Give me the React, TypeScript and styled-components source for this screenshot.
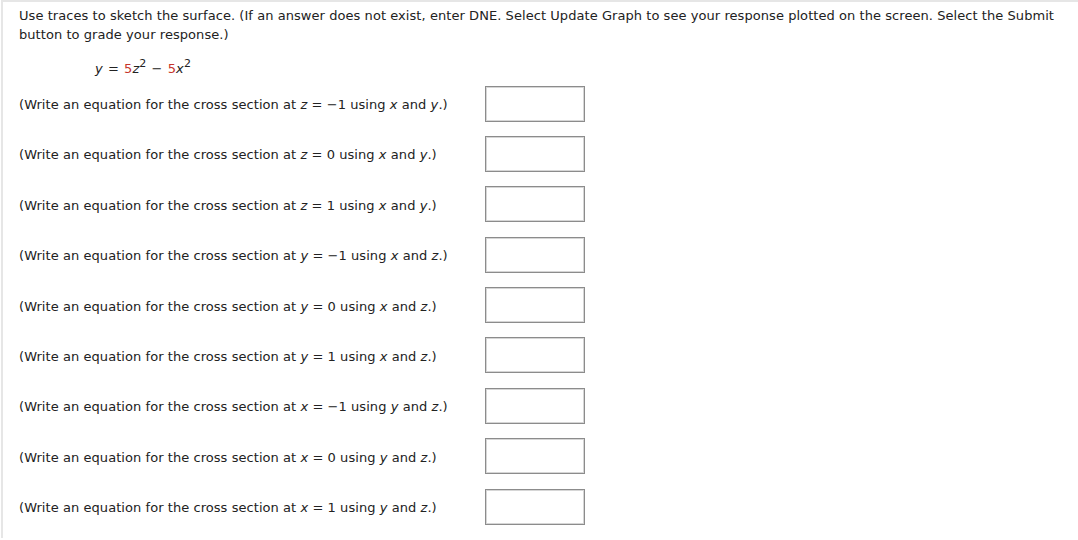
import React from "react";
import styled, { createGlobalStyle } from "styled-components";

const Global = createGlobalStyle`
  html, body { margin: 0; padding: 0; background: #fff; }
  body { font-family: "DejaVu Sans", Verdana, sans-serif; color: #222; }
`;

const Page = styled.div`
  border-top: 2px solid #e6e6e6;
  border-left: 2px solid #e6e6e6;
  margin-left: 1px;
  padding: 5px 0 0 16px;
  min-height: 538px;
  box-sizing: border-box;
  font-size: 13px;
  letter-spacing: 0.06px;
`;

const Intro = styled.p`
  margin: 0;
  line-height: 18.5px;
  width: 1055px;
`;

const Equation = styled.div`
  margin: 15px 0 0 76px;
  height: 20px;
  line-height: 20px;
  word-spacing: 1px;
`;

const V = styled.i`
  font-style: italic;
`;

const Red = styled.span`
  color: #c6352c;
`;

const Sup = styled.sup`
  font-size: 11px;
  line-height: 0;
  vertical-align: 6px;
`;

const List = styled.div`
  margin-top: 7px;
  display: flex;
  flex-direction: column;
  gap: 15.4px;
`;

const Row = styled.div`
  display: flex;
  align-items: center;
  height: 35px;
`;

const Label = styled.span`
  width: 466px;
  flex: none;
  padding-top: 2px;
`;

const Box = styled.div`
  width: 100px;
  height: 36px;
  box-sizing: border-box;
  border: 1px solid #8c8c8c;
  box-shadow: 0 0 0 1px #d6d6d6 inset;
  background: #fff;
`;

const rows: [string, string, string, string][] = [
  ["z", "\u22121", "x", "y"],
  ["z", "0", "x", "y"],
  ["z", "1", "x", "y"],
  ["y", "\u22121", "x", "z"],
  ["y", "0", "x", "z"],
  ["y", "1", "x", "z"],
  ["x", "\u22121", "y", "z"],
  ["x", "0", "y", "z"],
  ["x", "1", "y", "z"],
];

export default function App() {
  return (
    <>
      <Global />
      <Page>
        <Intro>
          Use traces to sketch the surface. (If an answer does not exist, enter DNE. Select Update Graph to see your
          response plotted on the screen. Select the Submit button to grade your response.)
        </Intro>
        <Equation>
          <V>y</V> = <Red>5</Red>
          <V>z</V>
          <Sup>2</Sup> {"\u2212"} <Red>5</Red>
          <V>x</V>
          <Sup>2</Sup>
        </Equation>
        <List>
          {rows.map(([a, val, p, q], i) => (
            <Row key={i}>
              <Label>
                (Write an equation for the cross section at <V>{a}</V> = {val} using <V>{p}</V> and <V>{q}</V>.)
              </Label>
              <Box />
            </Row>
          ))}
        </List>
      </Page>
    </>
  );
}
